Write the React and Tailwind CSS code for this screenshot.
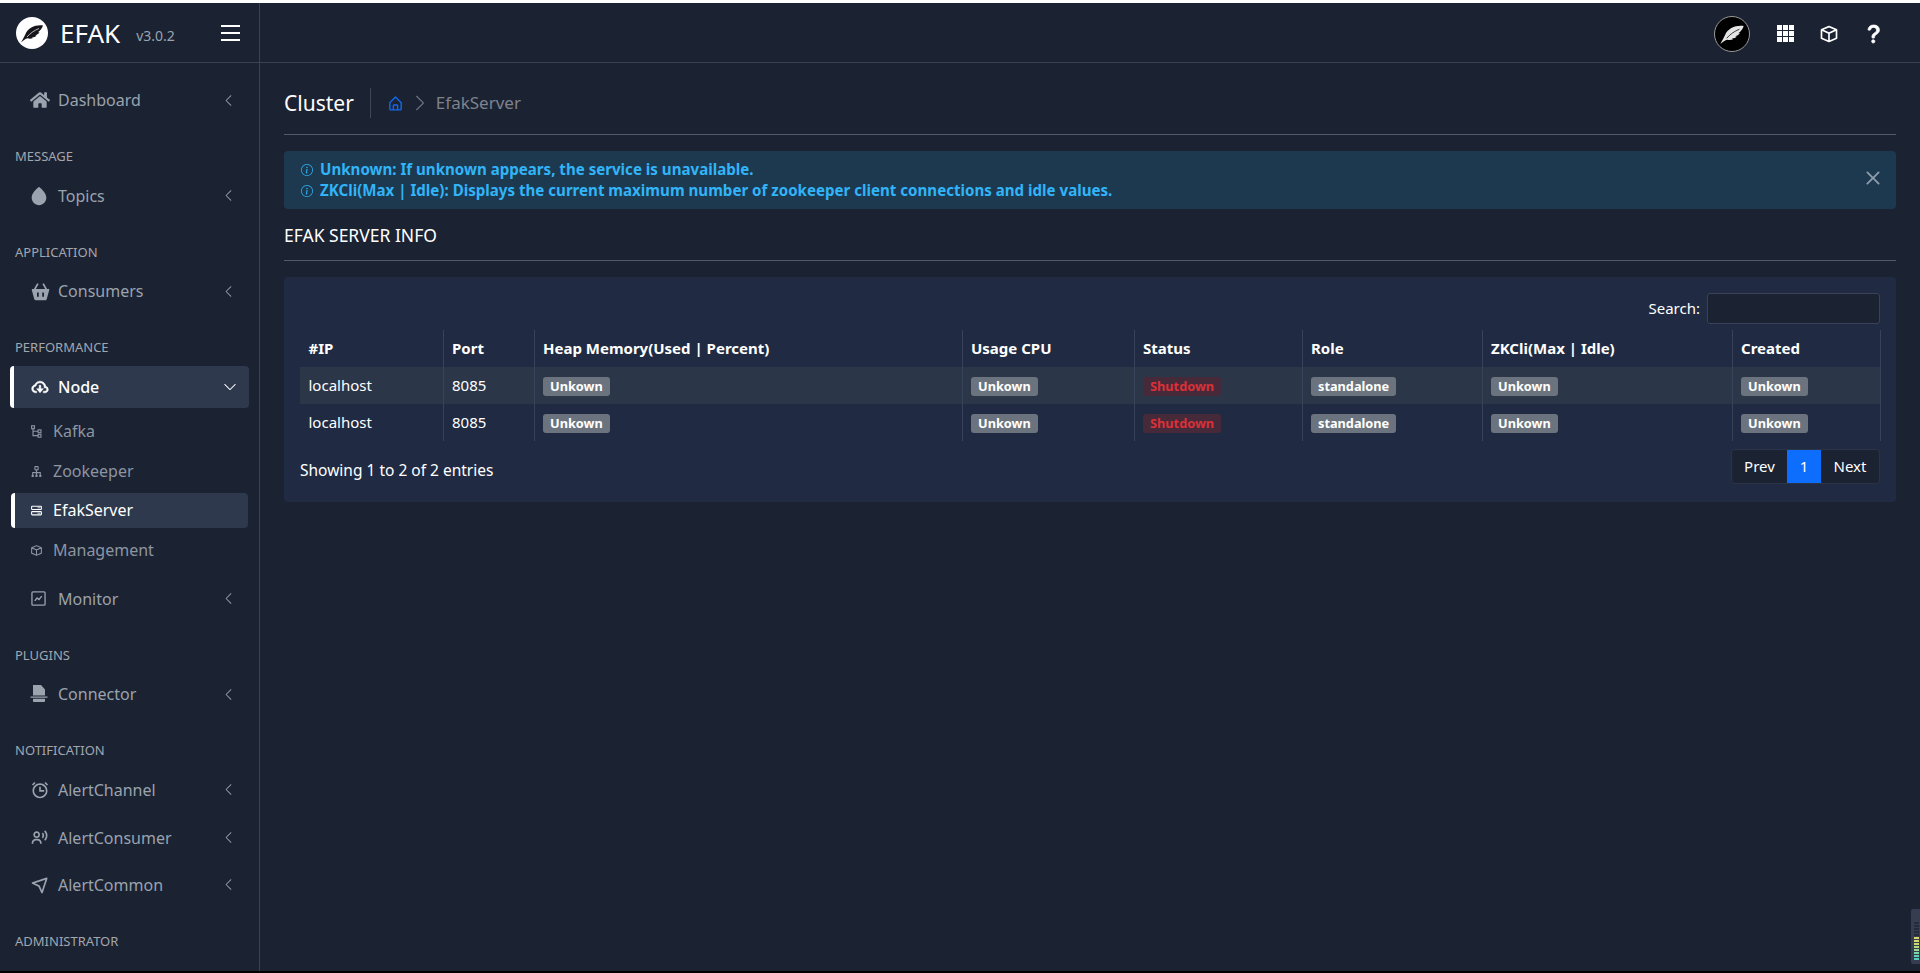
import React from 'react';
import {
  BiSolidDroplet, BiSolidBasket, BiCloudDownload, BiSitemap, BiServer, BiCube,
  BiAlarm, BiUserVoice, BiNavigation, BiHomeAlt,
} from 'react-icons/bi';
import { BsChevronLeft, BsChevronDown, BsChevronRight, BsInfoCircle, BsX, BsQuestionLg } from 'react-icons/bs';
import { FaHome } from 'react-icons/fa';

function Feather({ className, cut }) {
  return (
    <svg viewBox="0 0 32 32" className={className} fill="currentColor">
      <path d="M27 8.500C20 7.500 12 10.500 9.500 17 8.500 19 7 22 5 25.500c2.500-2.200 4.500-3.700 6.500-4.200 2 .6 4 .4 5.500-.3-.5-.4-1-.6-1.500-.8 2 .2 3.500-.4 5-1.500-.5-.3-1-.5-1.500-.6 1.800-.2 3.300-1.200 4.500-2.700-.5-.1-1-.2-1.500-.2C24.500 13.500 26 11.500 27 8.500z" />
      <path d="M11 20C14 16.500 18 13.500 23 11.500" fill="none" strokeWidth="0.700" className={cut} />
    </svg>
  );
}

function KafkaIcon({ className }) {
  return (
    <svg viewBox="0 0 16 16" className={className} fill="none" stroke="currentColor" strokeWidth="1.4">
      <rect x="2" y="1" width="3.500" height="3.500" />
      <rect x="10" y="6" width="3.500" height="3.500" />
      <rect x="10" y="11.500" width="3.500" height="3.500" />
      <path d="M3.700 4.500v8.500H10M3.700 7.700H10" />
    </svg>
  );
}

function MonitorIcon({ className }) {
  return (
    <svg viewBox="0 0 16 16" className={className} fill="none" stroke="currentColor">
      <rect x="1" y="1" width="14" height="14" rx="1" strokeWidth="1.400" />
      <path d="M4 10.500l2.500-3 2 1.500 3-3.500" strokeWidth="1.500" />
    </svg>
  );
}

function ConnectorIcon({ className }) {
  return (
    <svg viewBox="0 0 18 18" className={className} fill="currentColor">
      <path d="M3 0h8l4 4.500v6H3zM0.500 11.500h17v1.200H0.500zM3 13.700h12V16c0 .6-.4 1-1 1H4c-.6 0-1-.4-1-1z" />
    </svg>
  );
}

function GridIcon({ className }) {
  return (
    <svg viewBox="0 0 17 17" className={className} fill="currentColor">
      <path d="M0 0h5v5H0zM6 0h5v5H6zM12 0h5v5h-5zM0 6h5v5H0zM6 6h5v5H6zM12 6h5v5h-5zM0 12h5v5H0zM6 12h5v5H6zM12 12h5v5h-5z" />
    </svg>
  );
}

function MenuIcon({ className }) {
  return (
    <svg viewBox="0 0 19 16" className={className} fill="none" stroke="currentColor" strokeWidth="1.800">
      <path d="M0 1h19M0 8h19M0 15h19" />
    </svg>
  );
}

function NavItem({ icon: Icon, label, iconClass = 'text-[20px]', active, open, className = '' }) {
  return (
    <div
      className={`ml-[10px] mr-[10px] flex h-[42px] items-center rounded-[4px] ${
        active ? 'border-l-4 border-white bg-[#2e394e] pl-4 pr-3 font-medium text-white' : 'pl-5 pr-[14px] text-[#9aa3ae]'
      } ${className}`}
    >
      <span className="flex w-[28px] shrink-0 items-center">
        <Icon className={iconClass} />
      </span>
      <span className="flex-1 text-[16px]">{label}</span>
      {open ? <BsChevronDown className="text-[14px]" /> : <BsChevronLeft className="text-[13px]" />}
    </div>
  );
}

function SubItem({ icon: Icon, label, active, className = 'mt-[5px]' }) {
  return (
    <div
      className={`ml-[11px] mr-[11px] flex h-[35px] items-center rounded-[4px] text-[16px] ${
        active ? 'border-l-4 border-white bg-[#2e394e] pl-[15px] text-white' : 'pl-[19px] text-[#8c95a2]'
      } ${className}`}
    >
      <span className="flex w-[23px] shrink-0 items-center">
        <Icon className="h-[13px] w-[13px]" />
      </span>
      <span>{label}</span>
    </div>
  );
}

function SectionLabel({ children }) {
  return <div className="h-[53.5px] pl-[15px] pt-[25px] text-[13px] leading-[20px] text-[#a2a7af]">{children}</div>;
}

function Badge({ children, danger }) {
  return (
    <span
      className={`inline-flex h-[19px] items-center rounded-[3px] px-[7px] text-[12.75px] font-bold ${
        danger ? 'bg-[#472a3a] text-[#dc3037]' : 'bg-[#6b747e] text-white'
      }`}
    >
      {children}
    </span>
  );
}

function Sidebar() {
  return (
    <aside className="flex w-[260px] shrink-0 flex-col overflow-hidden border-r border-[#3a4254]">
      <div className="flex h-[60px] shrink-0 items-center border-b border-[#3a4254] pl-4 pr-[19px] pt-px">
        <div className="flex h-8 w-8 items-center justify-center rounded-full bg-white">
          <Feather className="h-8 w-8 text-[#16161a]" cut="stroke-white" />
        </div>
        <span className="ml-[12px] text-[26px] leading-none text-white">EFAK</span>
        <span className="ml-4 mt-[5px] text-[14px] text-[#9aa3ae]">v3.0.2</span>
        <MenuIcon className="ml-auto h-4 w-[19px] text-white" />
      </div>
      <NavItem icon={FaHome} label="Dashboard" className="mt-[16px]" />
      <SectionLabel>MESSAGE</SectionLabel>
      <NavItem icon={BiSolidDroplet} label="Topics" iconClass="text-[22px] -ml-[2px]" />
      <SectionLabel>APPLICATION</SectionLabel>
      <NavItem icon={BiSolidBasket} label="Consumers" iconClass="text-[21px]" />
      <SectionLabel>PERFORMANCE</SectionLabel>
      <NavItem icon={BiCloudDownload} label="Node" iconClass="text-[20px] stroke-[0.6px]" active open />
      <SubItem icon={KafkaIcon} label="Kafka" className="mt-[6px]" />
      <SubItem icon={BiSitemap} label="Zookeeper" />
      <SubItem icon={BiServer} label="EfakServer" active className="mt-[4px]" />
      <SubItem icon={BiCube} label="Management" />
      <NavItem icon={MonitorIcon} label="Monitor" iconClass="h-[15px] w-[15px] ml-[1px]" className="mt-[10px]" />
      <SectionLabel>PLUGINS</SectionLabel>
      <NavItem icon={ConnectorIcon} label="Connector" iconClass="h-[18px] w-[18px]" />
      <SectionLabel>NOTIFICATION</SectionLabel>
      <NavItem icon={BiAlarm} label="AlertChannel" />
      <NavItem icon={BiUserVoice} label="AlertConsumer" className="mt-[6px]" />
      <NavItem icon={BiNavigation} label="AlertCommon" className="mt-[5px]" />
      <SectionLabel>ADMINISTRATOR</SectionLabel>
    </aside>
  );
}

function Topbar() {
  return (
    <header className="flex h-[60px] shrink-0 items-center justify-end border-b border-[#3a4254] pr-[34px] pt-[2px] text-white">
      <div className="flex h-9 w-9 items-center justify-center rounded-full border border-[#9a9a9a] bg-black">
        <Feather className="h-[34px] w-[34px] text-[#e6e6e6]" cut="stroke-black" />
      </div>
      <GridIcon className="ml-[27px] h-[17px] w-[17px]" />
      <BiCube className="ml-[25px] text-[20px]" />
      <BsQuestionLg className="ml-[23px] text-[24px] stroke-[0.5px]" />
    </header>
  );
}

const cellClass = 'border-r border-[#38425a] px-[8.5px] align-middle';
const rows = [
  { stripe: true },
  { stripe: false },
];

function ServerTable() {
  return (
    <table className="w-[1580px] table-fixed border-collapse text-[15px] text-white">
      <colgroup>
        <col className="w-[143px]" />
        <col className="w-[91px]" />
        <col className="w-[428px]" />
        <col className="w-[172px]" />
        <col className="w-[168px]" />
        <col className="w-[180px]" />
        <col className="w-[250px]" />
        <col className="w-[148px]" />
      </colgroup>
      <thead>
        <tr className="h-[37px] text-left">
          {['#IP', 'Port', 'Heap Memory(Used | Percent)', 'Usage CPU', 'Status', 'Role', 'ZKCli(Max | Idle)', 'Created'].map((h) => (
            <th key={h} className={`${cellClass} font-bold`}>{h}</th>
          ))}
        </tr>
      </thead>
      <tbody>
        {rows.map((row, i) => (
          <tr key={i} className={`h-[37px] ${row.stripe ? 'bg-[#2c3649]' : ''}`}>
            <td className={cellClass}>localhost</td>
            <td className={cellClass}>8085</td>
            <td className={cellClass}><Badge>Unkown</Badge></td>
            <td className={cellClass}><Badge>Unkown</Badge></td>
            <td className={cellClass}><Badge danger>Shutdown</Badge></td>
            <td className={cellClass}><Badge>standalone</Badge></td>
            <td className={cellClass}><Badge>Unkown</Badge></td>
            <td className={cellClass}><Badge>Unkown</Badge></td>
          </tr>
        ))}
      </tbody>
    </table>
  );
}

function Content() {
  return (
    <main className="flex-1 overflow-hidden px-6">
      <div className="flex h-[72px] items-center border-b border-[#55596a]">
        <span className="pt-[10px] text-[21px] text-white">Cluster</span>
        <span className="ml-4 mt-[9px] h-[30px] w-px bg-[#3f4656]" />
        <span className="mt-[9px] flex items-center">
          <BiHomeAlt className="ml-[16px] text-[17px] text-[#1268f0]" />
          <BsChevronRight className="ml-[7px] text-[18px] text-[#6d7380]" />
          <span className="ml-[7px] text-[17px] text-[#7e838e]">EfakServer</span>
        </span>
      </div>
      <div className="relative mt-4 h-[58px] rounded-[4px] bg-[#1d394f] pl-[17px] pt-[8px] text-[15.1px] font-bold leading-[21px] text-[#31b4f8]">
        <div className="flex items-center gap-[7px]">
          <BsInfoCircle className="h-[12px] w-[12px]" />
          <span>Unknown: If unknown appears, the service is unavailable.</span>
        </div>
        <div className="flex items-center gap-[7px]">
          <BsInfoCircle className="h-[12px] w-[12px]" />
          <span>ZKCli(Max | Idle): Displays the current maximum number of zookeeper client connections and idle values.</span>
        </div>
        <BsX className="absolute right-[8px] top-[12px] text-[30px] text-[#8c9cab]" />
      </div>
      <div className="mt-[14px] border-b border-[#55596a] pb-[13px] text-[17.5px] leading-[24px] text-white">EFAK SERVER INFO</div>
      <section className="mt-4 h-[225px] rounded-[4px] bg-[#202b43] px-4 pt-4">
        <div className="flex h-[37px] items-start justify-end text-[15px] text-white">
          <label className="mr-[7px] mt-[4px]">Search:</label>
          <input className="h-[31px] w-[173px] rounded-[3px] border border-[#394258] bg-[#1b2232]" />
        </div>
        <ServerTable />
        <div className="mt-2 flex items-start justify-between text-[15px] text-white">
          <span className="mt-[10px] text-[15.5px]">Showing 1 to 2 of 2 entries</span>
          <div className="flex h-[35px] overflow-hidden rounded-[4px] border border-[#2b3347] bg-[#1b2232]">
            <span className="flex w-[55px] items-center justify-center">Prev</span>
            <span className="flex w-[34px] items-center justify-center bg-[#0d6efd]">1</span>
            <span className="flex w-[58px] items-center justify-center">Next</span>
          </div>
        </div>
      </section>
    </main>
  );
}

// small volume meter stuck on the right edge of the window
function SideMeter() {
  const colors = ['#252b3c', '#252b3c', '#252b3c', '#252b3c', '#252b3c', '#d8d96a', '#d4da6c', '#c8d96e', '#b4d97e', '#98d892', '#78d6a8', '#62d2b4', '#55cdbd'];
  return (
    <div className="absolute bottom-[9px] right-0 flex h-[55px] w-[9px] flex-col justify-end gap-px rounded-l-[2px] bg-[#363d50] pb-[4px] pl-[3px]">
      {colors.map((c, i) => (
        <div key={i} className="h-[2px] w-[5px] shrink-0" style={{ backgroundColor: c }} />
      ))}
    </div>
  );
}

export default function App() {
  return (
    <div className="relative flex h-screen flex-col overflow-hidden bg-[#1b2232] font-['Noto_Sans',sans-serif]">
      <div className="h-[3px] shrink-0 bg-white" />
      <div className="flex min-h-0 flex-1">
        <Sidebar />
        <div className="flex min-w-0 flex-1 flex-col">
          <Topbar />
          <Content />
        </div>
      </div>
      <div className="h-[2px] shrink-0 bg-black" />
      <SideMeter />
    </div>
  );
}
